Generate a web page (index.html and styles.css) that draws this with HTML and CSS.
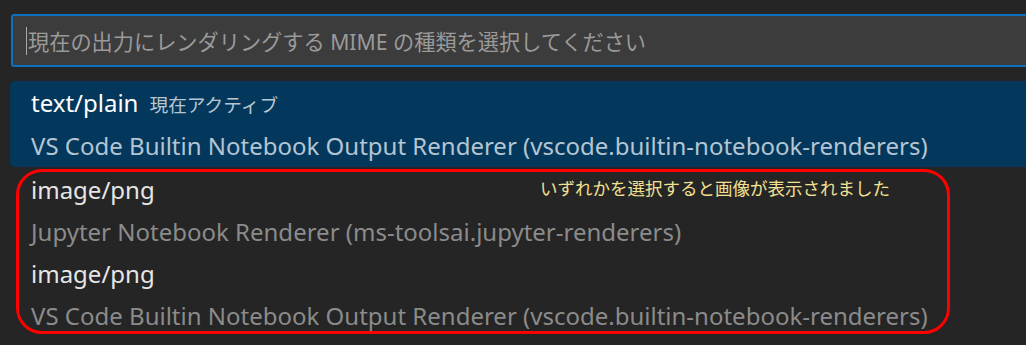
FILE: index.html
```html
<!DOCTYPE html>
<html>
<head>
    <title>MIME picker</title>
    <meta charset="UTF-8">
    <link rel="stylesheet" href="styles.css">
</head>
<body>
    <div class="picker">
        <div class="search">
            <span class="caret"></span>
            <span class="placeholder">現在の出力にレンダリングする MIME の種類を選択してください</span>
        </div>
        <div class="list">
            <div class="item selected">
                <div class="line"><span class="label">text/plain</span><span class="desc">現在アクティブ</span></div>
                <div class="line detail">VS Code Builtin Notebook Output Renderer (vscode.builtin-notebook-renderers)</div>
            </div>
            <div class="others">
                <div class="item">
                    <div class="line"><span class="label">image/png</span></div>
                    <div class="line detail">Jupyter Notebook Renderer (ms-toolsai.jupyter-renderers)</div>
                </div>
                <div class="item">
                    <div class="line"><span class="label">image/png</span></div>
                    <div class="line detail">VS Code Builtin Notebook Output Renderer (vscode.builtin-notebook-renderers)</div>
                </div>
            </div>
            <div class="mark"></div>
            <div class="note">いずれかを選択すると画像が表示されました</div>
        </div>
    </div>
</body>
</html>
```

FILE: styles.css
```css
html, body {
    margin: 0;
    padding: 0;
    background: #252525;
}
body {
    font-family: "Noto Sans", "Noto Sans CJK JP", sans-serif;
    width: 1026px;
    height: 345px;
    overflow: hidden;
}
.picker {
    padding: 14px 0 0 10px;
}
.search {
    display: flex;
    align-items: center;
    height: 49px;
    margin-left: 1px;
    margin-right: -20px;
    background: #3c3c3c;
    border: 2px solid #0e6fc0;
    border-radius: 3px;
    padding-left: 13px;
}
.caret {
    width: 1px;
    height: 28px;
    background: #aaa;
    margin-right: 1px;
}
.placeholder {
    color: #9a9a9a;
    font-size: 21.2px;
}
.list {
    position: relative;
    margin-top: 14px;
}
.item {
    padding-left: 21px;
}
.item.selected {
    background: #03385c;
    border-radius: 5px 0 0 5px;
}
.selected .line {
    height: 43px;
    line-height: 43px;
}
.others {
    padding-top: 2px;
}
.line {
    height: 42px;
    line-height: 42px;
    font-size: 24px;
    white-space: nowrap;
}
.label {
    color: #e6e6e6;
}
.selected .label {
    color: #ffffff;
}
.desc {
    color: #b8c6d2;
    font-size: 18.7px;
    margin-left: 11px;
}
.detail {
    color: #8b8b8b;
}
.selected .detail {
    color: #b4c5d3;
}
.mark {
    position: absolute;
    left: 6px;
    top: 88px;
    width: 928px;
    height: 159px;
    border: 3px solid #f00;
    border-radius: 26px;
}
.note {
    position: absolute;
    left: 530px;
    top: 94px;
    color: #f2e092;
    font-size: 17.5px;
}
```
